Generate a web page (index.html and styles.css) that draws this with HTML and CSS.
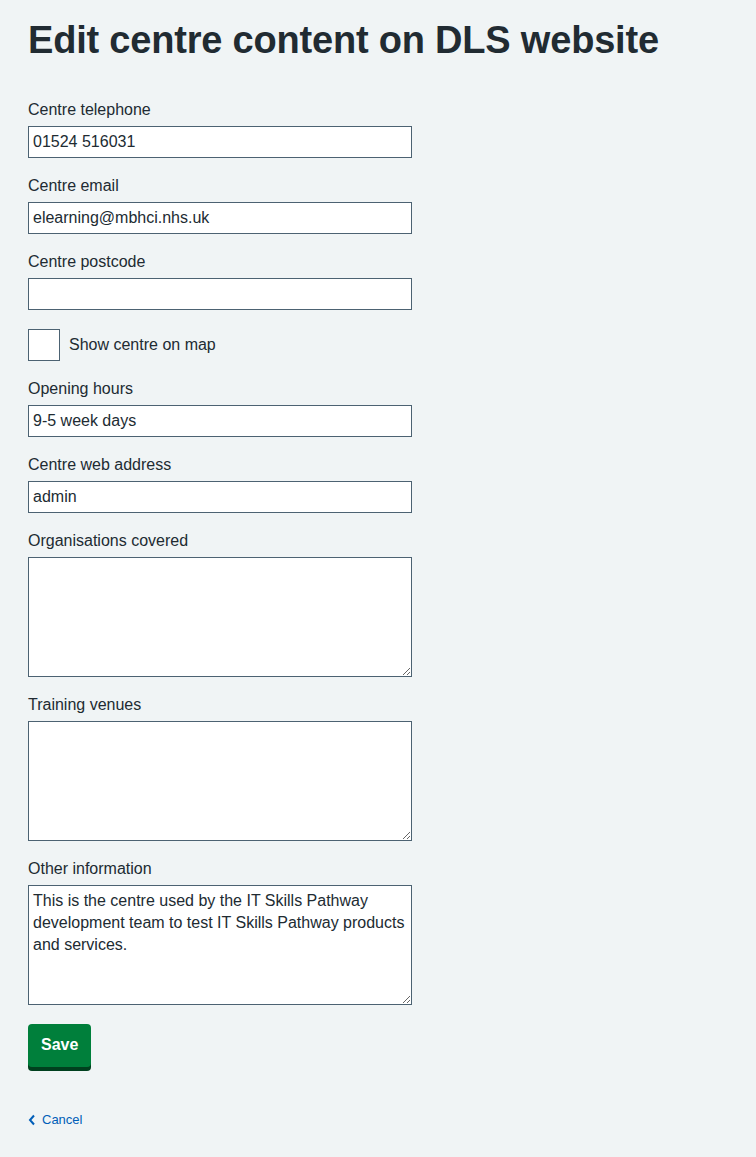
FILE: index.html
```html
<!DOCTYPE html>
<html lang="en">
<head>
<meta charset="utf-8">
<title>Edit centre content on DLS website</title>
<link rel="stylesheet" href="styles.css">
</head>
<body>
<main class="page">
  <h1 class="title">Edit centre content on DLS website</h1>
  <form class="form">
    <div class="group">
      <label class="label" for="tel">Centre telephone</label>
      <input class="input" id="tel" type="text" value="01524 516031">
    </div>
    <div class="group">
      <label class="label" for="email">Centre email</label>
      <input class="input" id="email" type="text" value="elearning@mbhci.nhs.uk">
    </div>
    <div class="group">
      <label class="label" for="postcode">Centre postcode</label>
      <input class="input" id="postcode" type="text" value="">
    </div>
    <div class="group checkbox-group">
      <label class="checkbox">
        <span class="box"></span>
        <span class="checkbox-label">Show centre on map</span>
      </label>
    </div>
    <div class="group">
      <label class="label" for="hours">Opening hours</label>
      <input class="input" id="hours" type="text" value="9-5 week days">
    </div>
    <div class="group">
      <label class="label" for="web">Centre web address</label>
      <input class="input" id="web" type="text" value="admin">
    </div>
    <div class="group">
      <label class="label" for="orgs">Organisations covered</label>
      <textarea class="textarea" id="orgs"></textarea>
    </div>
    <div class="group">
      <label class="label" for="venues">Training venues</label>
      <textarea class="textarea" id="venues"></textarea>
    </div>
    <div class="group">
      <label class="label" for="other">Other information</label>
      <textarea class="textarea" id="other">This is the centre used by the IT Skills Pathway development team to test IT Skills Pathway products and services.</textarea>
    </div>
    <button class="button" type="button">Save</button>
  </form>
  <a class="back" href="#">
    <svg class="chevron" viewBox="0 0 8 12" width="8" height="12" aria-hidden="true"><path d="M6 1.5 L2 6 L6 10.5" fill="none" stroke="#005eb8" stroke-width="2"/></svg>
    <span>Cancel</span>
  </a>
</main>
</body>
</html>
```
FILE: styles.css
```css
html, body {
  margin: 0;
  padding: 0;
  background: #f0f4f5;
}
body {
  font-family: "Liberation Sans", Arial, sans-serif;
  color: #212b32;
}
.page {
  padding: 16px 28px 20px;
}
.title {
  font-size: 38px;
  line-height: 48px;
  font-weight: 700;
  margin: 0 0 34px;
  letter-spacing: -0.2px;
}
.form {
  display: flex;
  flex-direction: column;
  align-items: flex-start;
}
.group {
  display: flex;
  flex-direction: column;
  margin-bottom: 16px;
}
.label {
  font-size: 16px;
  line-height: 24px;
  margin-bottom: 4px;
}
.input {
  box-sizing: border-box;
  width: 384px;
  height: 32px;
  border: 1px solid #4c6272;
  border-radius: 0;
  background: #fff;
  padding: 0 4px;
  font-family: inherit;
  font-size: 16px;
  color: #212b32;
  margin: 0;
}
.textarea {
  box-sizing: border-box;
  width: 384px;
  height: 120px;
  border: 1px solid #4c6272;
  border-radius: 0;
  background: #fff;
  padding: 4px;
  font-family: inherit;
  font-size: 16px;
  line-height: 22px;
  color: #212b32;
  margin: 0;
}
.checkbox-group {
  margin-top: 3px;
}
.checkbox {
  display: flex;
  align-items: center;
  gap: 9px;
}
.box {
  box-sizing: border-box;
  width: 32px;
  height: 32px;
  border: 1px solid #4c6272;
  background: #fff;
}
.checkbox-label {
  font-size: 16px;
  line-height: 24px;
}
.button {
  margin-top: 3px;
  background: #007f3b;
  color: #fff;
  border: 0;
  border-radius: 4px;
  box-shadow: 0 4px 0 #00401e;
  font-family: inherit;
  font-weight: 700;
  font-size: 16px;
  line-height: 24px;
  padding: 9px 13px 10px;
  cursor: pointer;
}
.back {
  display: inline-flex;
  align-items: center;
  gap: 6px;
  margin-top: 43px;
  color: #005eb8;
  font-size: 13px;
  line-height: 20px;
  text-decoration: none;
}
.chevron {
  display: block;
}
```
